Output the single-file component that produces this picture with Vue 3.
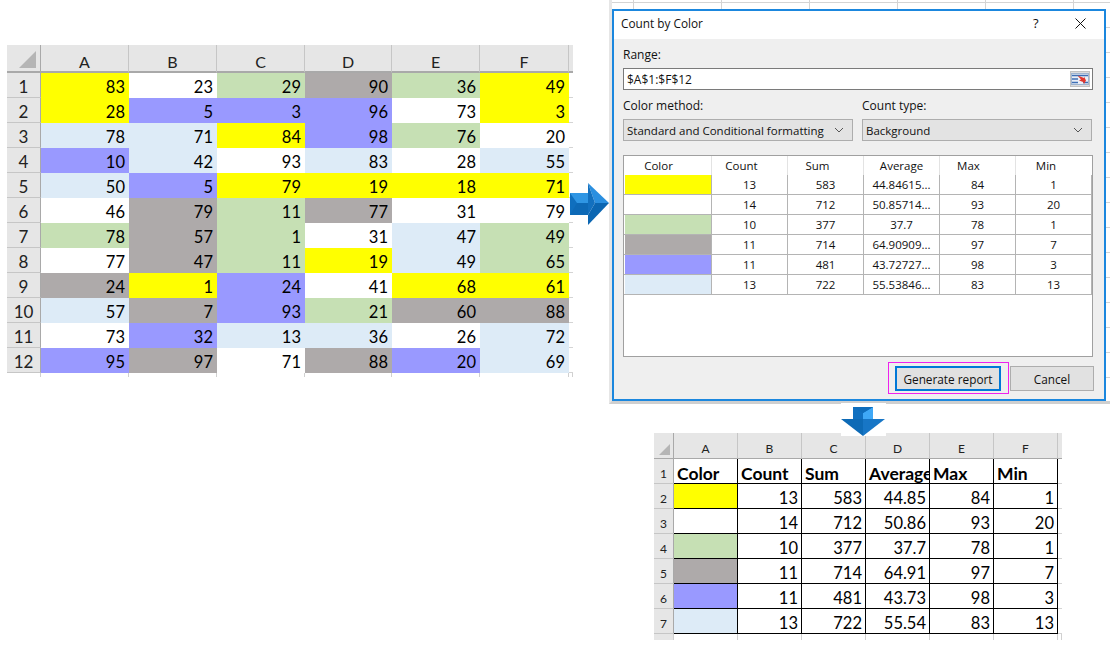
<script setup>
const fills = {
  Y: '#ffff00', W: '#ffffff', G: '#c6e0b4', S: '#aeaaaa', P: '#9999ff', L: '#ddebf7'
}
const cols = ['A', 'B', 'C', 'D', 'E', 'F']
const source = [
  [[83, 'Y'], [23, 'W'], [29, 'G'], [90, 'S'], [36, 'G'], [49, 'Y']],
  [[28, 'Y'], [5, 'P'], [3, 'P'], [96, 'P'], [73, 'W'], [3, 'Y']],
  [[78, 'L'], [71, 'L'], [84, 'Y'], [98, 'P'], [76, 'G'], [20, 'W']],
  [[10, 'P'], [42, 'L'], [93, 'W'], [83, 'L'], [28, 'W'], [55, 'L']],
  [[50, 'L'], [5, 'P'], [79, 'Y'], [19, 'Y'], [18, 'Y'], [71, 'Y']],
  [[46, 'W'], [79, 'S'], [11, 'G'], [77, 'S'], [31, 'W'], [79, 'W']],
  [[78, 'G'], [57, 'S'], [1, 'G'], [31, 'W'], [47, 'L'], [49, 'G']],
  [[77, 'W'], [47, 'S'], [11, 'G'], [19, 'Y'], [49, 'L'], [65, 'G']],
  [[24, 'S'], [1, 'Y'], [24, 'P'], [41, 'W'], [68, 'Y'], [61, 'Y']],
  [[57, 'L'], [7, 'S'], [93, 'P'], [21, 'G'], [60, 'S'], [88, 'S']],
  [[73, 'W'], [32, 'P'], [13, 'L'], [36, 'L'], [26, 'W'], [72, 'L']],
  [[95, 'P'], [97, 'S'], [71, 'W'], [88, 'S'], [20, 'P'], [69, 'L']]
]
const heads = ['Color', 'Count', 'Sum', 'Average', 'Max', 'Min']
const dialogRows = [
  ['Y', 13, 583, '44.84615...', 84, 1],
  ['W', 14, 712, '50.85714...', 93, 20],
  ['G', 10, 377, '37.7', 78, 1],
  ['S', 11, 714, '64.90909...', 97, 7],
  ['P', 11, 481, '43.72727...', 98, 3],
  ['L', 13, 722, '55.53846...', 83, 13]
]
const reportRows = [
  ['Y', 13, 583, '44.85', 84, 1],
  ['W', 14, 712, '50.86', 93, 20],
  ['G', 10, 377, '37.7', 78, 1],
  ['S', 11, 714, '64.91', 97, 7],
  ['P', 11, 481, '43.73', 98, 3],
  ['L', 13, 722, '55.54', 83, 13]
]
</script>

<template>
  <div class="canvas">
    <section class="source">
      <div class="sheet">
        <div class="s-head corner"><i class="tri"></i></div>
        <div v-for="c in cols" :key="c" class="s-head">{{ c }}</div>
        <div class="s-head s-tail"></div>
        <template v-for="(row, r) in source" :key="r">
          <div class="s-row">{{ r + 1 }}</div>
          <div v-for="(cell, i) in row" :key="i" class="s-cell" :style="{ background: fills[cell[1]] }">{{ cell[0] }}</div>
          <div class="s-tick"></div>
        </template>
        <div class="s-stub" v-for="n in 8" :key="'stub' + n"></div>
      </div>
    </section>

    <section class="right">
      <div class="backdrop">
        <div class="dialog">
          <header class="title">
            <span>Count by Color</span>
            <span class="help">?</span>
            <svg class="close" width="11" height="11" viewBox="0 0 11 11"><path d="M0.5 0.5L10.5 10.5M10.5 0.5L0.5 10.5" stroke="#111" stroke-width="1" fill="none" /></svg>
          </header>
          <div class="body">
            <div class="label">Range:</div>
            <div class="range">
              <span>$A$1:$F$12</span>
              <span class="pick">
                <svg width="18" height="12" viewBox="0 0 18 12">
                  <rect x="0.5" y="0.5" width="17" height="11" fill="#e9eef6" stroke="#9fb4d0" />
                  <path d="M1 2.5H17M1 6H7M1 9.5H7M12 9.5H17" stroke="#3f6fb5" stroke-width="1.4" />
                  <path d="M6.5 2.5L13 5V3.5L15 7.5L13 11L12.2 9L8 7.5L10 6.5Z" fill="#e2362c" />
                </svg>
              </span>
            </div>
            <div class="pair">
              <div>
                <div class="label">Color method:</div>
                <div class="combo">
                  <span>Standard and Conditional formatting</span>
                  <svg width="10" height="6" viewBox="0 0 10 6"><path d="M1 1L5 5L9 1" stroke="#555" fill="none" /></svg>
                </div>
              </div>
              <div>
                <div class="label">Count type:</div>
                <div class="combo">
                  <span>Background</span>
                  <svg width="10" height="6" viewBox="0 0 10 6"><path d="M1 1L5 5L9 1" stroke="#555" fill="none" /></svg>
                </div>
              </div>
            </div>
            <div class="tbl">
              <div class="tgrid">
                <div v-for="h in heads" :key="h" class="th">{{ h }}</div>
                <template v-for="(row, r) in dialogRows" :key="r">
                  <div class="td swatch-cell"><i class="swatch" :style="{ background: fills[row[0]] }"></i></div>
                  <div v-for="(v, i) in row.slice(1)" :key="i" class="td">{{ v }}</div>
                </template>
              </div>
            </div>
            <div class="actions">
              <div class="marked">
                <button class="btn primary">Generate report</button>
                <i class="pink"></i>
              </div>
              <button class="btn">Cancel</button>
            </div>
          </div>
        </div>
      </div>

      <div class="report">
        <div class="r-head corner2"><i class="tri small"></i></div>
        <div v-for="c in cols" :key="c" class="r-head">{{ c }}</div>
        <div class="r-head r-tail"></div>
        <div class="r-row">1</div>
        <div v-for="h in heads" :key="h" class="r-cell bold">{{ h }}</div>
        <div class="r-tick"></div>
        <template v-for="(row, r) in reportRows" :key="r">
          <div class="r-row">{{ r + 2 }}</div>
          <div class="r-cell" :style="{ background: fills[row[0]] }"></div>
          <div v-for="(v, i) in row.slice(1)" :key="i" class="r-cell num">{{ v }}</div>
          <div class="r-tick"></div>
        </template>
        <div class="r-stub" v-for="n in 8" :key="'rs' + n"></div>
      </div>
    </section>

    <svg class="arrow-right" width="41" height="44" viewBox="0 0 41 44">
      <polygon points="1,11 19,11 19,33 1,33" fill="#0f6fbe" />
      <polygon points="1,11 19,11 19,21 8,21" fill="#2f96e4" />
      <polygon points="1,33 8,21 19,21 19,33" fill="#0d69b6" />
      <polygon points="19,1 40,21 26,21" fill="#2a8fe0" />
      <polygon points="19,1 26,21 19,33 19,11" fill="#1270bf" />
      <polygon points="19,43 40,21 26,21 19,33" fill="#0b66b2" />
    </svg>

    <svg class="arrow-down" width="45" height="33" viewBox="0 0 45 33">
      <rect width="45" height="33" fill="#fff" />
      <polygon points="12,4 32,4 32,16 12,16" fill="#1170c0" />
      <polygon points="22,10 32,4 32,16 22,16" fill="#3fa8f6" />
      <polygon points="12,4 32,4 22,10" fill="#0f6dbb" />
      <polygon points="0,16 22,16 22,33" fill="#0d6ab6" />
      <polygon points="44,16 22,16 22,33" fill="#1776c6" />
    </svg>
  </div>
</template>

<style>
html, body { margin: 0; background: #fff; }
</style>

<style scoped>
.canvas {
  position: relative;
  display: flex;
  width: 1114px;
  height: 645px;
  overflow: hidden;
  background: #fff;
  color: #000;
}
i { display: block; }

/* source sheet */
.source { width: 609px; padding: 45px 0 0 7px; box-sizing: border-box; flex: none; }
.sheet {
  display: grid;
  grid-template-columns: 34px 88px 88px 88px 87px 88px 89px 4px;
  grid-template-rows: 28px repeat(12, 25px) 4px;
  font-family: "Lato", "Liberation Sans", sans-serif;
}
.s-head {
  background: #e6e6e6;
  border-bottom: 2px solid #a9a9a9;
  border-right: 1px solid #c6c6c6;
  box-sizing: border-box;
  text-align: center;
  font-size: 16px;
  line-height: 23px;
  padding-top: 5px;
  color: #222;
}
.corner { position: relative; border-right: 1px solid #a9a9a9; }
.tri {
  position: absolute;
  right: 4px;
  bottom: 3px;
  width: 0;
  height: 0;
  border-left: 17px solid transparent;
  border-bottom: 17px solid #b5b5b5;
}
.s-tail { border-right: none; }
.s-row {
  background: #e6e6e6;
  border-right: 1px solid #a9a9a9;
  border-bottom: 1px solid #c6c6c6;
  box-sizing: border-box;
  text-align: center;
  font-size: 17px;
  line-height: 27px;
  color: #222;
}
.s-cell {
  text-align: right;
  padding-right: 4px;
  font-size: 16.5px;
  line-height: 28px;
  height: 25px;
  box-sizing: border-box;
}
.s-tick { border-bottom: 1px solid #d4d4d4; box-sizing: border-box; height: 25px; }
.s-stub { border-right: 1px solid #d0d0d0; box-sizing: border-box; }
.s-stub:first-child { background: #e6e6e6; }

/* backdrop + dialog */
.right { flex: none; width: 505px; }
.backdrop {
  width: 501px;
  height: 404px;
  box-sizing: border-box;
  padding: 9px 4px 0 0;
  border-left: 3px solid #e6e6e6;
  border-bottom: 3px solid #cfcfcf;
  background-color: #fff;
  background-image:
    linear-gradient(to right, #d4d4d4 1px, transparent 1px),
    linear-gradient(to bottom, #d4d4d4 1px, transparent 1px);
  background-size: 88px 25px;
  background-position: 21px 2px;
}
.dialog {
  width: 494px;
  height: 392px;
  box-sizing: border-box;
  border: 2px solid #1b87de;
  background: #efefef;
  font-family: "Open Sans", "Liberation Sans", sans-serif;
  font-size: 12px;
  color: #111;
}
.title {
  height: 28px;
  box-sizing: border-box;
  padding: 0 18px 4px 7px;
  background: #fff;
  display: flex;
  align-items: center;
  font-size: 11.8px;
  position: relative;
}
.help { position: absolute; left: 419px; top: 3px; font-size: 13px; }
.close { margin-left: auto; }
.body { padding: 8px 11px 0 9px; }
.label { height: 16px; line-height: 16px; margin-bottom: 5px; font-size: 12px; }
.range {
  height: 22px;
  box-sizing: border-box;
  background: #fff;
  border: 1px solid #7a7a7a;
  display: flex;
  align-items: center;
  justify-content: space-between;
  padding: 0 2px 0 3px;
  font-size: 12px;
}
.pick {
  width: 20px;
  height: 16px;
  background: #dcdcdc;
  border: 1px solid #c2c2c2;
  box-sizing: border-box;
  display: flex;
  align-items: center;
  justify-content: center;
}
.pair {
  display: grid;
  grid-template-columns: 230px 230px;
  column-gap: 9px;
  margin-top: 8px;
}
.combo {
  height: 22px;
  box-sizing: border-box;
  border: 1px solid #adadad;
  background: #e3e3e3;
  display: flex;
  align-items: center;
  justify-content: space-between;
  padding: 0 8px 0 3px;
  font-size: 11.5px;
}
.tbl {
  margin-top: 14px;
  height: 202px;
  box-sizing: border-box;
  border: 1px solid #a0a0a0;
  background: #fff;
}
.tgrid {
  display: grid;
  grid-template-columns: 88px repeat(5, 76px);
  grid-template-rows: 19px repeat(6, 20px);
  font-size: 11.5px;
}
.th {
  border-right: 1px solid #e3e3e3;
  box-sizing: border-box;
  line-height: 19px;
  text-align: center;
}
.th:nth-child(1) { padding-right: 18px; }
.th:nth-child(2) { padding-right: 16px; }
.th:nth-child(3) { padding-right: 16px; }
.th:nth-child(5) { padding-right: 18px; }
.th:nth-child(6) { padding-right: 16px; border-right: none; }
.td {
  border-right: 1px solid #b4b4b4;
  border-bottom: 1px solid #b4b4b4;
  box-sizing: border-box;
  text-align: center;
  line-height: 19px;
}
.swatch-cell { padding-left: 1px; }
.swatch { width: 100%; height: 100%; }
.actions {
  display: flex;
  justify-content: flex-end;
  gap: 9px;
  margin: 9px -1px 0 0;
}
.marked { position: relative; }
.btn {
  width: 84px;
  height: 25px;
  box-sizing: border-box;
  border: 1px solid #adadad;
  background: #e1e1e1;
  color: #111;
  font: 11.8px "Open Sans", "Liberation Sans", sans-serif;
  padding: 0;
  display: block;
}
.primary { width: 106px; border: 2px solid #0078d7; }
.pink {
  position: absolute;
  left: -7px;
  right: -8px;
  top: -4px;
  bottom: -3px;
  border: 1px solid #ee22ee;
}

/* report sheet */
.report {
  margin: 29px 0 0 45px;
  display: grid;
  grid-template-columns: 20px repeat(6, 64px) 4px;
  grid-template-rows: 26px repeat(7, 25px) 6px;
  font-family: "Lato", "Liberation Sans", sans-serif;
  width: 408px;
}
.r-head {
  background: #e6e6e6;
  border-bottom: 1px solid #a9a9a9;
  border-right: 1px solid #c6c6c6;
  box-sizing: border-box;
  text-align: center;
  font-size: 12px;
  line-height: 25px;
  padding-top: 3px;
  color: #222;
}
.corner2 { position: relative; border-right: 1px solid #a9a9a9; }
.tri.small {
  right: 3px;
  bottom: 3px;
  border-left-width: 11px;
  border-bottom-width: 11px;
}
.r-tail { border-right: none; }
.r-row {
  background: #e6e6e6;
  border-right: 1px solid #a9a9a9;
  border-bottom: 1px solid #c6c6c6;
  box-sizing: border-box;
  text-align: center;
  font-size: 12px;
  line-height: 30px;
  color: #222;
}
.r-cell {
  border-right: 1px solid #000;
  border-bottom: 1px solid #000;
  box-sizing: border-box;
  font-size: 16.5px;
  line-height: 28px;
  white-space: nowrap;
  overflow: hidden;
}
.bold { font-weight: 700; font-size: 17.5px; padding-left: 3px; line-height: 29px; }
.num { text-align: right; padding-right: 3px; }
.r-tick { border-bottom: 1px solid #d4d4d4; box-sizing: border-box; }
.r-stub { border-right: 1px solid #d0d0d0; box-sizing: border-box; }
.r-stub:nth-last-child(8) { background: #e6e6e6; }

/* arrows lie over the panels */
.arrow-right { position: absolute; left: 569px; top: 182px; }
.arrow-down { position: absolute; left: 841px; top: 403px; }
</style>
